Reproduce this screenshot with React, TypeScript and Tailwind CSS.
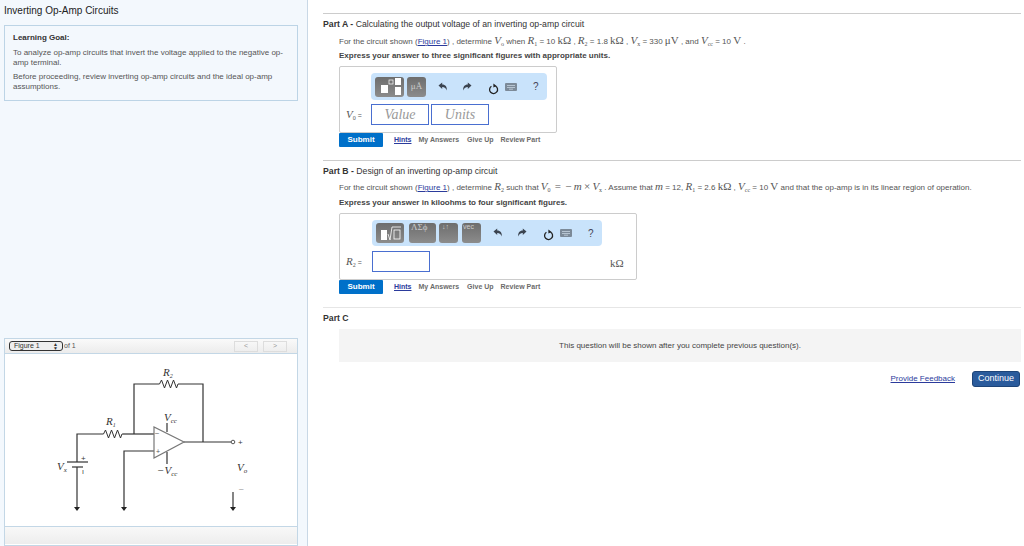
import React from "react";

const serif = "font-['Liberation_Serif',serif]";

function V({ n, sub, upright }: { n: string; sub?: string; upright?: boolean }) {
  return (
    <span className={`${serif} text-[11px] text-[#555] ${upright ? "" : "italic"}`}>
      {n}
      {sub && <sub className="text-[6px] not-italic">{sub}</sub>}
    </span>
  );
}

function BackArrow({ flip }: { flip?: boolean }) {
  return (
    <svg width="10" height="10" viewBox="0 0 10 10" className={flip ? "-scale-x-100" : ""}>
      <path d="M0.5 3.6 L4.2 0.5 V2.4 C7.4 2.4 9.2 4.6 8.8 8.6 C8 6.2 6.6 5 4.2 5 V6.9 Z" fill="#3b4450" />
    </svg>
  );
}

function ReloadIcon() {
  return (
    <svg width="11" height="12" viewBox="0 0 11 12" fill="none">
      <path d="M7.4 3 A4 4 0 1 1 3.4 3.2" stroke="#222" strokeWidth="1.3" />
      <path d="M5.4 0.6 L8.6 3 L5.4 4.6 Z" fill="#222" />
    </svg>
  );
}

function KeyboardIcon() {
  return (
    <svg width="12" height="8" viewBox="0 0 12 8">
      <rect width="12" height="8" rx="1" fill="#7c8a98" />
      <path d="M2 2.5H10M2 4.5H10M4 6.2H8" stroke="#c5d3df" strokeWidth="0.8" />
    </svg>
  );
}

function ToolButton({ w, children }: { w: string; children?: React.ReactNode }) {
  return (
    <div className={`${w} relative flex h-5 shrink-0 items-center justify-center overflow-hidden rounded-[3px] bg-gradient-to-b from-[#6d6d6d] to-[#8c8c8c]`}>
      {children}
    </div>
  );
}

function ToolActions() {
  return (
    <div className="flex items-center">
      <div className="ml-[5px] flex w-[23px] justify-center"><BackArrow /></div>
      <div className="ml-[1px] flex w-[23px] justify-center"><BackArrow flip /></div>
      <div className="ml-[8px] mt-[4px] flex w-[14px] justify-center"><ReloadIcon /></div>
      <div className="ml-[5px] flex"><KeyboardIcon /></div>
      <span className="ml-[16px] font-['Liberation_Sans',sans-serif] text-[10px] text-[#445]">?</span>
    </div>
  );
}

function SubmitRow() {
  return (
    <div className="flex items-center">
      <button type="button" className="h-[14px] w-11 rounded-[1px] bg-[#0070c9] text-[8px] font-bold text-white">
        Submit
      </button>
      <a className="ml-[11px] text-[7px] font-bold text-[#2b3b9c] underline">Hints</a>
      <span className="ml-[7px] text-[7px] font-bold text-[#6b6b6b]">My Answers</span>
      <span className="ml-[8px] text-[7px] font-bold text-[#6b6b6b]">Give Up</span>
      <span className="ml-[7px] text-[7px] font-bold text-[#6b6b6b]">Review Part</span>
    </div>
  );
}

function Zigzag({ x, y }: { x: number; y: number }) {
  return (
    <path
      d={`M${x} ${y} l2.5 0 l2 -4 l3 8 l3 -8 l3 8 l3 -8 l3 8 l1.5 -4 l1 0`}
      fill="none"
      stroke="#333"
      strokeWidth="1"
    />
  );
}

function Circuit() {
  const lbl = "font-['Liberation_Serif',serif] italic";
  return (
    <svg viewBox="5 354 293 172" className="h-[172px] w-[293px]">
      <g fill="none" stroke="#333" strokeWidth="1.2">
        <path d="M157 384 H134 V434" />
        <path d="M179 384 H203 V442" />
        <path d="M77 462 V434 H101" />
        <path d="M123 434 H154" />
        <path d="M67 462 H88" />
        <path d="M72 467 H83" />
        <path d="M77 467 V507" />
        <path d="M154 451 H124 V507" />
        <path d="M184 442 H231" />
        <path d="M167 423 V432" />
        <path d="M167 452 V464" />
        <path d="M233 492 V507" />
      </g>
      <Zigzag x={157} y={384} />
      <Zigzag x={101} y={434} />
      <path d="M154 427 V458 L184 442 Z" fill="#fff" stroke="#777" strokeWidth="1.2" />
      <path d="M74 507 h6 l-3 4 Z M121 507 h6 l-3 4 Z M230 507 h6 l-3 4 Z" fill="#222" />
      <circle cx="233" cy="442" r="1.8" fill="#fff" stroke="#555" />
      <g fontSize="9" fill="#333" className="font-['Liberation_Sans',sans-serif]">
        <text x="81" y="461" fontSize="8">+</text>
        <text x="82" y="474" fontSize="7">ı</text>
        <text x="238" y="445" fontSize="8">+</text>
        <text x="239" y="491" fontSize="8" fill="#888">–</text>
        <text x="155" y="435" fontSize="7" fill="#555">–</text>
        <text x="156" y="454" fontSize="7" fill="#555">+</text>
      </g>
      <g fill="#333" fontSize="11" className={lbl}>
        <text x="163" y="376">R<tspan fontSize="6" dy="2">2</tspan></text>
        <text x="106" y="425">R<tspan fontSize="6" dy="2">1</tspan></text>
        <text x="164" y="421">V<tspan fontSize="7" dy="2">cc</tspan></text>
        <text x="157" y="474">−V<tspan fontSize="7" dy="2">cc</tspan></text>
        <text x="57" y="470">V<tspan fontSize="7" dy="2">x</tspan></text>
        <text x="237" y="471">V<tspan fontSize="7" dy="2">o</tspan></text>
      </g>
    </svg>
  );
}

export default function App() {
  return (
    <div className="flex h-[546px] w-[1024px] overflow-hidden bg-white font-['Liberation_Sans',sans-serif] text-[#333]">
      <aside className="w-[308px] shrink-0 border-r border-[#c9d8e6] bg-[#f3f8fd] pl-1 pr-[9px]">
        <h1 className="h-[25px] pt-[4px] text-[10px] leading-[14px] text-[#222]">Inverting Op-Amp Circuits</h1>
        <div className="h-[76px] border border-[#bcd4e6] px-2 pt-[7px] text-[8px] leading-[10px] text-[#555]">
          <p className="font-bold text-[#333]">Learning Goal:</p>
          <p className="mt-[5px]">To analyze op-amp circuits that invert the voltage applied to the negative op-amp terminal.</p>
          <p className="mt-[4px]">Before proceeding, review inverting op-amp circuits and the ideal op-amp assumptions.</p>
        </div>
        <div className="mt-[237px] h-[208px] border border-[#c3d7e6] bg-white">
          <div className="flex h-[15px] items-center border-b border-[#c3d7e6] bg-gradient-to-b from-[#fafafa] to-[#ececec] pl-[4px] pr-[10px]">
            <div className="flex h-[10px] w-[54px] items-center justify-between rounded-[3px] border border-[#333] bg-[#eee] px-1 text-[7px]">
              <span>Figure 1</span>
              <span className="text-[5px] leading-[4px]">▲<br />▼</span>
            </div>
            <span className="ml-[1px] text-[7px] text-[#555]">of 1</span>
            <div className="ml-auto flex gap-[5px]">
              <div className="flex h-[11px] w-6 items-center justify-center border border-[#ddd] text-[7px] text-[#999]">&lt;</div>
              <div className="flex h-[11px] w-6 items-center justify-center border border-[#ddd] text-[7px] text-[#999]">&gt;</div>
            </div>
          </div>
          <Circuit />
          <div className="h-[18px] border-t border-[#c3d7e6] bg-gradient-to-b from-[#f8f8f8] to-[#ededed]" />
        </div>
      </aside>

      <main className="min-w-0 flex-1 pl-[15px] pr-[3px] pt-[13px]">
        <section className="border-t border-[#ccc]">
          <h2 className="pt-[4px] text-[8.7px] leading-[12px]"><b>Part A -</b> Calculating the output voltage of an inverting op-amp circuit</h2>
          <div className="ml-4">
            <p className="mt-[4px] h-[12px] whitespace-nowrap text-[8px] leading-[12px] text-[#555]">
              For the circuit shown (<a className="text-[#2b3b9c] underline">Figure 1</a>) , determine <V n="V" sub="o" /> when <V n="R" sub="1" /> = 10 <V n="kΩ" upright /> , <V n="R" sub="2" /> = 1.8 <V n="kΩ" upright /> , <V n="V" sub="x" /> = 330 <V n="μV" upright /> , and <V n="V" sub="cc" /> = 10 <V n="V" upright /> .
            </p>
            <p className="mt-[5px] text-[8px] font-bold leading-[10px] text-[#444]">Express your answer to three significant figures with appropriate units.</p>
            <div className="mt-[5px] h-[67px] w-[218px] rounded-[2px] border border-[#ccc] pl-[31px] pt-[6px]">
              <div className="flex h-[27px] w-[176px] items-center rounded-[4px] bg-[#c9e3fb] pl-[4px]">
                <ToolButton w="w-[29px]">
                  <svg width="26" height="18" viewBox="0 0 26 18">
                    <rect x="4" y="7" width="7" height="8" fill="#fff" />
                    <rect x="12" y="2" width="4" height="4" fill="none" stroke="#fff" strokeWidth="0.7" />
                    <rect x="18" y="0" width="6" height="7" fill="#fff" />
                    <rect x="18" y="9" width="6" height="8" fill="#fff" />
                  </svg>
                </ToolButton>
                <div className="ml-[3px]">
                  <ToolButton w="w-[19px]">
                    <span className={`${serif} text-[9px] text-[#ccc]`}>μÅ</span>
                  </ToolButton>
                </div>
                <ToolActions />
              </div>
              <div className="mt-[4px] flex h-[21px] items-center">
                <span className="-ml-[25px] w-[25px] text-[7px] text-[#555]"><V n="V" sub="0" /> =</span>
                <div className={`flex h-[21px] w-[58px] items-center justify-center border border-[#4a6fd0] ${serif} text-[14px] italic text-[#999]`}>Value</div>
                <div className={`ml-[2px] flex h-[21px] w-[58px] items-center justify-center border border-[#4a6fd0] ${serif} text-[14px] italic text-[#999]`}>Units</div>
              </div>
            </div>
            <SubmitRow />
          </div>
        </section>

        <section className="mt-[13px] border-t border-[#ccc]">
          <h2 className="pt-[4px] text-[8.7px] leading-[12px]"><b>Part B -</b> Design of an inverting op-amp circuit</h2>
          <div className="ml-4">
            <p className="mt-[3px] h-[12px] whitespace-nowrap text-[8px] leading-[12px] text-[#555]">
              For the circuit shown (<a className="text-[#2b3b9c] underline">Figure 1</a>) , determine <V n="R" sub="2" /> such that <V n="V" sub="0" /> <span className={`${serif} mx-[2px] text-[11px]`}>=</span> <span className={`${serif} text-[11px]`}>−</span> <V n="m" /> <span className={`${serif} text-[11px]`}>×</span> <V n="V" sub="x" /> . Assume that <V n="m" /> = 12, <V n="R" sub="1" /> = 2.6 <V n="kΩ" upright /> , <V n="V" sub="cc" /> = 10 <V n="V" upright /> and that the op-amp is in its linear region of operation.
            </p>
            <p className="mt-[6px] text-[8px] font-bold leading-[10px] text-[#444]">Express your answer in kiloohms to four significant figures.</p>
            <div className="mt-[5px] h-[67px] w-[298px] rounded-[2px] border border-[#ccc] pl-[32px] pt-[6px]">
              <div className="flex h-[26px] w-[230px] items-center rounded-[4px] bg-[#c9e3fb] pl-[4px]">
                <ToolButton w="w-[28px]">
                  <svg width="26" height="18" viewBox="0 0 26 18" fill="none">
                    <rect x="4" y="6" width="6" height="10" fill="#fff" />
                    <path d="M11 10 L13 16 L15 3 H24" stroke="#fff" strokeWidth="0.8" />
                    <rect x="17" y="6" width="6" height="9" stroke="#fff" strokeWidth="0.8" />
                  </svg>
                </ToolButton>
                <div className="ml-[5px]">
                  <ToolButton w="w-[27px]">
                    <span className={`${serif} absolute left-[2px] top-0 text-[9px] leading-[9px] text-[#ccc]`}>ΛΣϕ</span>
                  </ToolButton>
                </div>
                <div className="ml-[3px]">
                  <ToolButton w="w-[19px]">
                    <span className="absolute left-[3px] top-0 text-[7px] leading-[7px] text-[#ccc]">↓↑</span>
                  </ToolButton>
                </div>
                <div className="ml-[4px]">
                  <ToolButton w="w-[19px]">
                    <span className="absolute left-[1px] top-0 text-[7px] leading-[7px] text-[#ccc]">vec</span>
                  </ToolButton>
                </div>
                <ToolActions />
              </div>
              <div className="mt-[5px] flex h-[21px] items-center">
                <span className="-ml-[26px] w-[26px] text-[7px] text-[#555]"><V n="R" sub="2" /> =</span>
                <div className="h-[21px] w-[58px] border border-[#4a6fd0]" />
                <span className="ml-[180px]"><V n="kΩ" upright /></span>
              </div>
            </div>
            <SubmitRow />
          </div>
        </section>

        <section className="mt-[13px] border-t border-[#e6e6e6]">
          <h2 className="pt-[4px] text-[8.7px] font-bold leading-[12px]">Part C</h2>
          <div className="ml-4 mt-[5px] flex h-[33px] items-center justify-center bg-[#f4f4f4] text-[8px] text-[#444]">
            This question will be shown after you complete previous question(s).
          </div>
        </section>

        <div className="mt-[9px] flex items-center justify-end pr-[1px]">
          <a className="text-[8px] text-[#2b3b9c] underline">Provide Feedback</a>
          <button type="button" className="ml-[17px] h-[16px] w-12 rounded-[3px] border border-[#1d4478] bg-[#2a5b9c] text-[9px] text-white">Continue</button>
        </div>
      </main>
    </div>
  );
}
